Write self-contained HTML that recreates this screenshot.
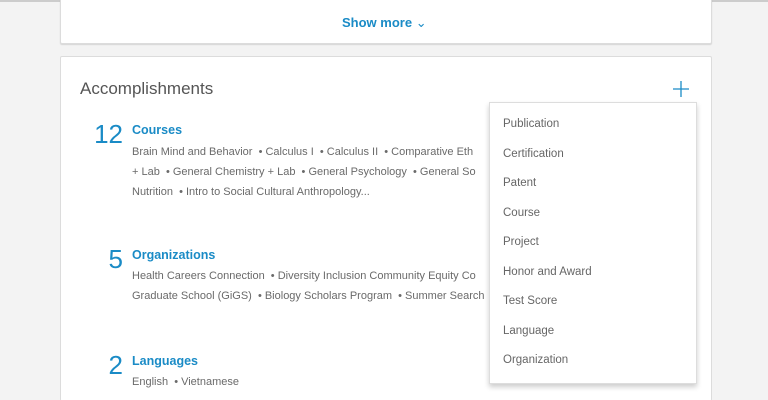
<!DOCTYPE html>
<html style="overflow:hidden;height:400px"><head><style>
body{margin:0;width:768px;height:400px;background:#f3f3f3;font-family:"Liberation Sans",sans-serif;overflow:hidden;position:relative}
.card{position:absolute;left:60px;width:650px;background:#fff;border:1px solid #dcdcdc;box-shadow:0 1px 1px rgba(0,0,0,.12);border-radius:2px}
.top{position:absolute;left:0;top:0;width:768px;height:2px;background:#ccc}
.sm{position:absolute;left:342px;top:15px;color:#1a8bc6;font-size:13px;font-weight:bold}
h2{position:absolute;left:80px;top:79px;margin:0;font-weight:normal;font-size:17px;color:#555}
.num{position:absolute;color:#1a8bc6;font-size:26px;text-align:right;width:40px}
.t{position:absolute;left:132px;color:#1a8bc6;font-size:12.5px;font-weight:bold}
.d{position:absolute;left:132px;color:#6a6a6a;font-size:11px;line-height:20px;white-space:nowrap}
.menu{position:absolute;left:489px;top:102px;width:206px;height:280px;background:#fff;border:1px solid #ddd;box-shadow:0 3px 5px rgba(0,0,0,.2)}
.menu div{position:absolute;left:13px;font-size:11.5px;color:#666}
</style></head><body>
<div class="top"></div>
<div class="card" style="top:-2px;height:44px"></div>
<div class="sm">Show more <span style="font-weight:normal">&#8964;</span></div>
<div class="card" style="top:56px;height:344px;border-bottom:none;box-shadow:none"></div>
<h2>Accomplishments</h2>
<svg style="position:absolute;left:673px;top:81px" width="16" height="16"><path d="M8 0V16M0 8H16" stroke="#1a8bc6" stroke-width="1.3"/></svg>
<div class="num" style="left:83px;top:119px">12</div>
<div class="t" style="top:123px">Courses</div>
<div class="d" style="top:142px">Brain Mind and Behavior &nbsp;• Calculus I &nbsp;• Calculus II &nbsp;• Comparative Eth<br>+ Lab &nbsp;• General Chemistry + Lab &nbsp;• General Psychology &nbsp;• General So<br>Nutrition &nbsp;• Intro to Social Cultural Anthropology...</div>
<div class="num" style="left:83px;top:244px">5</div>
<div class="t" style="top:248px">Organizations</div>
<div class="d" style="top:266px">Health Careers Connection &nbsp;• Diversity Inclusion Community Equity Co<br>Graduate School (GiGS) &nbsp;• Biology Scholars Program &nbsp;• Summer Search</div>
<div class="num" style="left:83px;top:350px">2</div>
<div class="t" style="top:354px">Languages</div>
<div class="d" style="top:372px">English &nbsp;• Vietnamese</div>
<div class="menu">
<div style="top:15px">Publication</div>
<div style="top:45px">Certification</div>
<div style="top:74px">Patent</div>
<div style="top:104px">Course</div>
<div style="top:133px">Project</div>
<div style="top:163px">Honor and Award</div>
<div style="top:192px">Test Score</div>
<div style="top:222px">Language</div>
<div style="top:251px">Organization</div>
</div>
</body></html>
